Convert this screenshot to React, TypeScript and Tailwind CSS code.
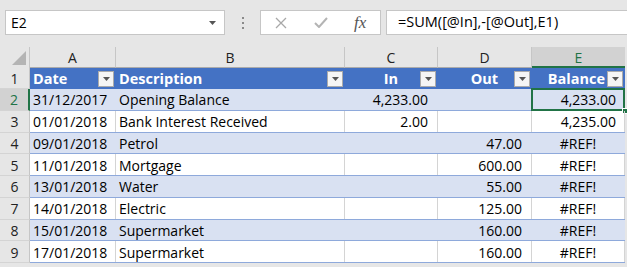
import React from 'react'

type Row = {
  date: string
  desc: string
  inAmt: string
  outAmt: string
  bal: string
}

const rows: Row[] = [
  { date: '31/12/2017', desc: 'Opening Balance', inAmt: '4,233.00', outAmt: '', bal: '4,233.00' },
  { date: '01/01/2018', desc: 'Bank Interest Received', inAmt: '2.00', outAmt: '', bal: '4,235.00' },
  { date: '09/01/2018', desc: 'Petrol', inAmt: '', outAmt: '47.00', bal: '#REF!' },
  { date: '11/01/2018', desc: 'Mortgage', inAmt: '', outAmt: '600.00', bal: '#REF!' },
  { date: '13/01/2018', desc: 'Water', inAmt: '', outAmt: '55.00', bal: '#REF!' },
  { date: '14/01/2018', desc: 'Electric', inAmt: '', outAmt: '125.00', bal: '#REF!' },
  { date: '15/01/2018', desc: 'Supermarket', inAmt: '', outAmt: '160.00', bal: '#REF!' },
  { date: '17/01/2018', desc: 'Supermarket', inAmt: '', outAmt: '160.00', bal: '#REF!' },
]

const widths = ['w-[86px]', 'w-[229px]', 'w-[93px]', 'w-[94px]', 'w-[93px]']

function FilterButton() {
  return (
    <div className="w-[16px] h-[16px] bg-[#f5f5f5] border border-[#ababab] flex items-center justify-center shrink-0">
      <svg width="7" height="4" viewBox="0 0 7 4">
        <path d="M0 0 H7 L3.5 4 Z" fill="#555" />
      </svg>
    </div>
  )
}

function HeaderCell({ label, w, gap }: { label: string; w: string; gap?: string }) {
  return (
    <div className={`${w} h-full flex items-center pl-[3px] pr-[2px] ${gap ? 'justify-end' : 'justify-between'}`}>
      <span className={`font-bold text-white pt-[2px] ${gap ?? ''}`}>{label}</span>
      <FilterButton />
    </div>
  )
}

export default function App() {
  return (
    <div className="w-[627px] h-[267px] overflow-hidden bg-[#e6e6e6] font-['Open_Sans',sans-serif] text-[14px] text-black leading-none">
      {/* formula bar */}
      <div className="h-[47px] flex items-start pt-[10px] pl-[5px]">
        <div className="w-[220px] h-[25px] bg-white border border-[#c6c6c6] flex items-center justify-between pl-[5px] pr-[8px]">
          <span>E2</span>
          <svg width="7" height="4" viewBox="0 0 7 4">
            <path d="M0 0 H7 L3.5 4 Z" fill="#555" />
          </svg>
        </div>
        <div className="w-[35px] h-[25px] flex flex-col items-center justify-center gap-[3px]">
          <span className="w-[2px] h-[2px] bg-[#8a8a8a]" />
          <span className="w-[2px] h-[2px] bg-[#8a8a8a]" />
          <span className="w-[2px] h-[2px] bg-[#8a8a8a]" />
        </div>
        <div className="w-[121px] h-[25px] bg-white border border-[#c6c6c6] flex items-center">
          <div className="w-[40px] flex justify-center">
            <svg width="12" height="12" viewBox="0 0 12 12">
              <path d="M1 1 L11 11 M11 1 L1 11" stroke="#a8a8a8" strokeWidth="1.3" />
            </svg>
          </div>
          <div className="w-[40px] flex justify-center">
            <svg width="14" height="11" viewBox="0 0 14 11">
              <path d="M1 6 L5 10 L13 1" stroke="#b4b4b4" strokeWidth="2" fill="none" />
            </svg>
          </div>
          <div className="w-[40px] flex justify-center">
            <span className="font-['Liberation_Serif',serif] italic text-[17px] text-[#555]">fx</span>
          </div>
        </div>
        <div className="ml-[5px] flex-1 h-[25px] bg-white border border-[#c6c6c6] border-r-0 flex items-center pl-[11px] text-[14.5px]">
          =SUM([@In],-[@Out],E1)
        </div>
      </div>

      {/* column headers */}
      <div className="h-[21px] flex text-[#222]">
        <div className="w-[30px] h-full flex items-end justify-end pr-[3px] pb-[3px] border-r border-[#c6c6c6]">
          <svg width="14" height="14" viewBox="0 0 14 14">
            <path d="M14 0 V14 H0 Z" fill="#b4b4b4" />
          </svg>
        </div>
        {['A', 'B', 'C', 'D'].map((c, i) => (
          <div key={c} className={`${widths[i]} h-full flex items-center justify-center border-r border-[#c6c6c6] border-b border-b-[#ababab] pt-[2px]`}>
            {c}
          </div>
        ))}
        <div className="w-[93px] h-full flex items-center justify-center bg-[#d2d2d2] text-[#217346] border-b-2 border-[#217346] pt-[2px]">
          E
        </div>
      </div>

      {/* row 1 - table header */}
      <div className="h-[21px] flex">
        <div className="w-[30px] h-full flex items-center justify-center pt-[2px] text-[#222] border-r border-[#c6c6c6] border-b border-b-[#d4d4d4]">1</div>
        <div className="flex h-full bg-[#4472c4] text-[14.5px]">
          <HeaderCell label="Date" w={widths[0]} />
          <HeaderCell label="Description" w={widths[1]} />
          <HeaderCell label="In" w={widths[2]} gap="mr-[22px]" />
          <HeaderCell label="Out" w={widths[3]} gap="mr-[16px]" />
          <HeaderCell label="Balance" w={widths[4]} gap="mr-[2px]" />
        </div>
      </div>

      {rows.map((r, i) => {
        const band = i % 2 === 0
        const selected = i === 0
        const cellBorder = band ? 'border-r border-[#d9e1f2]' : 'border-r border-[#d4d4d4]'
        return (
          <div key={i} className="h-[21.75px] flex">
            <div
              className={`w-[30px] h-full flex items-center justify-center pt-[2px] border-b border-b-[#d4d4d4] ${
                selected ? 'bg-[#d2d2d2] text-[#217346] border-r-2 border-r-[#217346]' : 'text-[#222] border-r border-r-[#c6c6c6]'
              }`}
            >
              {i + 2}
            </div>
            <div className={`flex h-full border-b border-[#8ea9db] ${band ? 'bg-[#d9e1f2]' : 'bg-white'}`}>
              <div className={`${widths[0]} h-full flex items-center pt-[2px] pl-[3px] ${cellBorder}`}>{r.date}</div>
              <div className={`${widths[1]} h-full flex items-center pt-[2px] pl-[3px] ${cellBorder}`}>{r.desc}</div>
              <div className={`${widths[2]} h-full flex items-center pt-[2px] justify-end pr-[9px] ${cellBorder}`}>{r.inAmt}</div>
              <div className={`${widths[3]} h-full flex items-center pt-[2px] justify-end pr-[9px] ${cellBorder}`}>{r.outAmt}</div>
              <div
                className={`${widths[4]} relative h-full flex items-center pt-[2px] ${
                  r.bal.startsWith('#') ? 'justify-center' : 'justify-end pr-[8px]'
                } ${cellBorder}`}
              >
                {r.bal}
                {selected && (
                  <>
                    <div className="absolute inset-[-1px] border-2 border-[#217346]" />
                    <div className="absolute right-[-4px] bottom-[-4px] w-[6px] h-[6px] bg-[#217346] border border-white" />
                  </>
                )}
              </div>
            </div>
          </div>
        )
      })}
    </div>
  )
}
